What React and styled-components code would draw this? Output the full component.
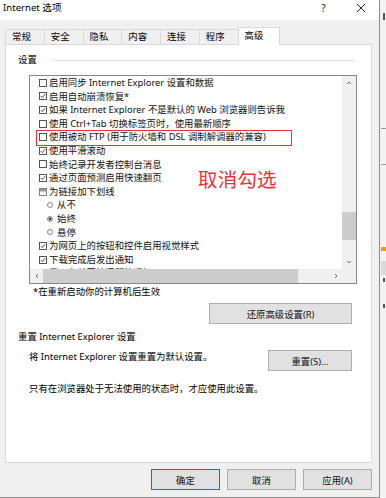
import React from 'react';
import styled, { createGlobalStyle } from 'styled-components';

const GlobalStyle = createGlobalStyle`
  html, body {
    margin: 0;
    padding: 0;
    background: #f0f0f0;
  }
  * {
    box-sizing: border-box;
  }
  body {
    font-family: "Noto Sans", "Noto Sans CJK SC", sans-serif;
    font-size: 9.4px;
    color: #000;
  }
`;

const Screen = styled.div`
  display: flex;
  width: 386px;
  height: 498px;
  overflow: hidden;
`;

const Dialog = styled.div`
  width: 380px;
  height: 498px;
  display: flex;
  flex-direction: column;
  background: #f0f0f0;
  border-right: 1px solid #8c8c8c;
  border-bottom: 1px solid #8c8c8c;
`;

const TitleBar = styled.div`
  height: 20px;
  background: #fff;
  display: flex;
  align-items: flex-start;
  padding: 1px 0 0 3px;
  line-height: 14px;
  font-size: 9.6px;
`;

const Title = styled.span`
  flex: 1;
`;

const TitleButton = styled.span`
  width: 37px;
  height: 14px;
  display: flex;
  align-items: center;
  justify-content: center;
  font-size: 10px;
  color: #222;
`;

const TabStrip = styled.div`
  margin-top: 7px;
  height: 17px;
  padding-left: 5px;
  display: flex;
  align-items: flex-end;
  position: relative;
  z-index: 1;
`;

const Tab = styled.div`
  height: ${(p) => (p.$active ? '18px' : '15px')};
  margin-bottom: ${(p) => (p.$active ? '-1px' : '0')};
  padding: ${(p) => (p.$active ? '0 16px 0 6px' : '0 13px 0 6px')};
  line-height: ${(p) => (p.$active ? '15px' : '14px')};
  background: ${(p) => (p.$active ? '#fff' : '#f0f0f0')};
  border: 1px solid #d9d9d9;
  border-bottom: none;
  margin-right: -1px;
  white-space: nowrap;
`;

const Panel = styled.div`
  height: 419px;
  margin: 0 7px 0 5px;
  background: #fff;
  border: 1px solid #d9d9d9;
  padding: 0 19px 0 12px;
  display: flex;
  flex-direction: column;
`;

const GroupHeader = styled.div`
  margin-top: 6px;
  height: 16px;
  display: flex;
  align-items: center;
  gap: 16px;
  margin-right: -2px;
`;

const GroupLine = styled.div`
  flex: 1;
  height: 1px;
  background: #dcdcdc;
  margin-top: 2px;
`;

const ListBox = styled.div`
  margin: 8px -5px 0 11px;
  height: 209px;
  border: 1px solid #828790;
  display: grid;
  grid-template-columns: 1fr 14px;
  grid-template-rows: 1fr 14px;
`;

const Viewport = styled.div`
  position: relative;
  overflow: hidden;
  padding-left: 9px;
  white-space: nowrap;
`;

const Item = styled.div`
  position: relative;
  height: 13.6px;
  line-height: 13.6px;
  display: flex;
  align-items: center;
  gap: ${(p) => (p.$radio ? '4px' : '2px')};
  padding-left: ${(p) => (p.$radio ? '8px' : '0')};
  color: #111;

  ${(p) =>
    p.$marked &&
    `
    &::after {
      content: '';
      position: absolute;
      left: -3px;
      top: 0;
      width: 254px;
      height: 14px;
      border: 1px solid #e2363c;
    }
  `}
`;

const Annotation = styled.div`
  position: absolute;
  left: 168px;
  top: 94px;
  font-size: 19.5px;
  line-height: 20px;
  color: #e8323a;
  letter-spacing: 0.2px;
`;

const VScroll = styled.div`
  background: #f0f0f0;
  display: flex;
  flex-direction: column;
`;

const HScroll = styled.div`
  background: #f0f0f0;
  display: flex;
  align-items: stretch;
`;

const Corner = styled.div`
  background: #f0f0f0;
`;

const Arrow = styled.div`
  width: ${(p) => (p.$horizontal ? '13px' : '14px')};
  height: ${(p) => (p.$horizontal ? '14px' : '14px')};
  display: flex;
  align-items: center;
  justify-content: center;
`;

const VTrack = styled.div`
  flex: 1;
  display: flex;
  flex-direction: column;
`;

const VThumb = styled.div`
  margin-top: 122px;
  height: 28px;
  background: #cdcdcd;
`;

const HThumb = styled.div`
  width: 255px;
  background: #cdcdcd;
`;

const Spacer = styled.div`
  flex: 1;
`;

const Note = styled.div`
  margin: 1px 0 0 15px;
  line-height: 14px;
`;

const Button = styled.div`
  width: ${(p) => p.$w}px;
  height: 21px;
  background: #e1e1e1;
  border: 1px solid ${(p) => (p.$primary ? '#0078d7' : '#adadad')};
  display: flex;
  align-items: center;
  justify-content: center;
  color: #111;
`;

const RightRow = styled.div`
  margin-top: 4px;
  display: flex;
  justify-content: flex-end;
`;

const SectionTitle = styled.div`
  margin-top: 6px;
  line-height: 14px;
`;

const ResetRow = styled.div`
  margin-top: 6px;
  display: flex;
  justify-content: space-between;
  align-items: flex-start;
  padding-left: 11px;
`;

const ResetText = styled.div`
  line-height: 14px;
`;

const Hint = styled.div`
  margin-top: 11px;
  padding-left: 11px;
  line-height: 14px;
`;

const Footer = styled.div`
  padding: 6px 7px 0 0;
  display: flex;
  justify-content: flex-end;
  gap: 7px;
`;

const BackWindow = styled.div`
  flex: 1;
  height: 498px;
  background: #f3f3f3;
  display: flex;
  flex-direction: column;
  padding-left: 1px;
`;

const BackGlyph = styled.div`
  margin-top: ${(p) => p.$top}px;
  width: 2px;
  height: ${(p) => p.$h}px;
  background: #555;
  margin-left: 2px;
`;

const BackLine = styled.div`
  margin-top: ${(p) => p.$top}px;
  height: 1px;
  background: #9a9a9a;
`;

const BackBar = styled.div`
  margin-top: ${(p) => p.$top}px;
  height: ${(p) => p.$h}px;
  background: ${(p) => p.$c};
`;

const Check = ({ checked }) => (
  <svg width="8" height="8" viewBox="0 0 8 8">
    <rect x="0.5" y="0.5" width="7" height="7" fill="#fff" stroke="#444" strokeWidth="0.9" />
    {checked && (
      <path d="M1.8 4.1 L3.3 5.6 L6.2 2.2" fill="none" stroke="#333" strokeWidth="0.9" />
    )}
  </svg>
);

const GroupIcon = () => (
  <svg width="8" height="8" viewBox="0 0 8 8">
    <rect x="0.5" y="0.5" width="7" height="7" fill="#fff" stroke="#777" strokeWidth="0.9" />
    <rect x="1" y="1" width="6" height="2.5" fill="#9a9a9a" />
  </svg>
);

const Radio = ({ checked }) => (
  <svg width="6" height="6" viewBox="0 0 6 6">
    <circle cx="3" cy="3" r="2.5" fill="#fff" stroke="#555" strokeWidth="0.7" />
    {checked && <circle cx="3" cy="3" r="1.4" fill="#333" />}
  </svg>
);

const Chevron = ({ dir }) => {
  const d = {
    up: 'M1 4 L3 2 L5 4',
    down: 'M1 2 L3 4 L5 2',
    left: 'M4 1 L2 3 L4 5',
    right: 'M2 1 L4 3 L2 5',
  }[dir];
  return (
    <svg width="6" height="6" viewBox="0 0 6 6">
      <path d={d} fill="none" stroke="#606060" strokeWidth="0.9" />
    </svg>
  );
};

const tabs = ['常规', '安全', '隐私', '内容', '连接', '程序', '高级'];

const items = [
  { type: 'check', label: '启用同步 Internet Explorer 设置和数据' },
  { type: 'check', checked: true, label: '启用自动崩溃恢复*' },
  { type: 'check', checked: true, label: '如果 Internet Explorer 不是默认的 Web 浏览器则告诉我' },
  { type: 'check', label: '使用 Ctrl+Tab 切换标签页时，使用最新顺序' },
  { type: 'check', label: '使用被动 FTP (用于防火墙和 DSL 调制解调器的兼容)', marked: true },
  { type: 'check', checked: true, label: '使用平滑滚动' },
  { type: 'check', label: '始终记录开发者控制台消息' },
  { type: 'check', checked: true, label: '通过页面预测启用快速翻页' },
  { type: 'group', label: '为链接加下划线' },
  { type: 'radio', label: '从不' },
  { type: 'radio', checked: true, label: '始终' },
  { type: 'radio', label: '悬停' },
  { type: 'check', checked: true, label: '为网页上的按钮和控件启用视觉样式' },
  { type: 'check', checked: true, label: '下载完成后发出通知' },
  { type: 'check', checked: true, label: '显示有关网站问题的通知' },
];

const App = () => {
  return (
    <>
      <GlobalStyle />
      <Screen>
        <Dialog>
          <TitleBar>
            <Title>Internet 选项</Title>
            <TitleButton>?</TitleButton>
            <TitleButton>
              <svg width="10" height="10" viewBox="0 0 10 10">
                <path d="M1 1 L9 9 M9 1 L1 9" stroke="#222" strokeWidth="1" />
              </svg>
            </TitleButton>
          </TitleBar>

          <TabStrip>
            {tabs.map((t) => (
              <Tab key={t} $active={t === '高级'}>
                {t}
              </Tab>
            ))}
          </TabStrip>

          <Panel>
            <GroupHeader>
              <span>设置</span>
              <GroupLine />
            </GroupHeader>

            <ListBox>
              <Viewport>
                {items.map((it) => (
                  <Item key={it.label} $radio={it.type === 'radio'} $marked={it.marked}>
                    {it.type === 'check' && <Check checked={it.checked} />}
                    {it.type === 'group' && <GroupIcon />}
                    {it.type === 'radio' && <Radio checked={it.checked} />}
                    <span>{it.label}</span>
                  </Item>
                ))}
                <Annotation>取消勾选</Annotation>
              </Viewport>
              <VScroll>
                <Arrow>
                  <Chevron dir="up" />
                </Arrow>
                <VTrack>
                  <VThumb />
                </VTrack>
                <Arrow>
                  <Chevron dir="down" />
                </Arrow>
              </VScroll>
              <HScroll>
                <Arrow $horizontal>
                  <Chevron dir="left" />
                </Arrow>
                <HThumb />
                <Spacer />
                <Arrow $horizontal>
                  <Chevron dir="right" />
                </Arrow>
              </HScroll>
              <Corner />
            </ListBox>

            <Note>*在重新启动你的计算机后生效</Note>

            <RightRow>
              <Button $w={143}>还原高级设置(R)</Button>
            </RightRow>

            <SectionTitle>重置 Internet Explorer 设置</SectionTitle>

            <ResetRow>
              <ResetText>将 Internet Explorer 设置重置为默认设置。</ResetText>
              <Button $w={84}>重置(S)...</Button>
            </ResetRow>

            <Hint>只有在浏览器处于无法使用的状态时，才应使用此设置。</Hint>
          </Panel>

          <Footer>
            <Button $w={69} $primary>
              确定
            </Button>
            <Button $w={69}>取消</Button>
            <Button $w={69}>应用(A)</Button>
          </Footer>
        </Dialog>

        <BackWindow>
          <BackGlyph $top={13} $h={7} />
          <BackLine $top={108} />
          <BackLine $top={35} />
          <BackBar $top={82} $h={4} $c="#e5a50a" />
          <BackBar $top={10} $h={14} $c="#dadada" />
          <BackGlyph $top={3} $h={4} />
          <BackGlyph $top={22} $h={4} />
        </BackWindow>
      </Screen>
    </>
  );
};

export default App;
